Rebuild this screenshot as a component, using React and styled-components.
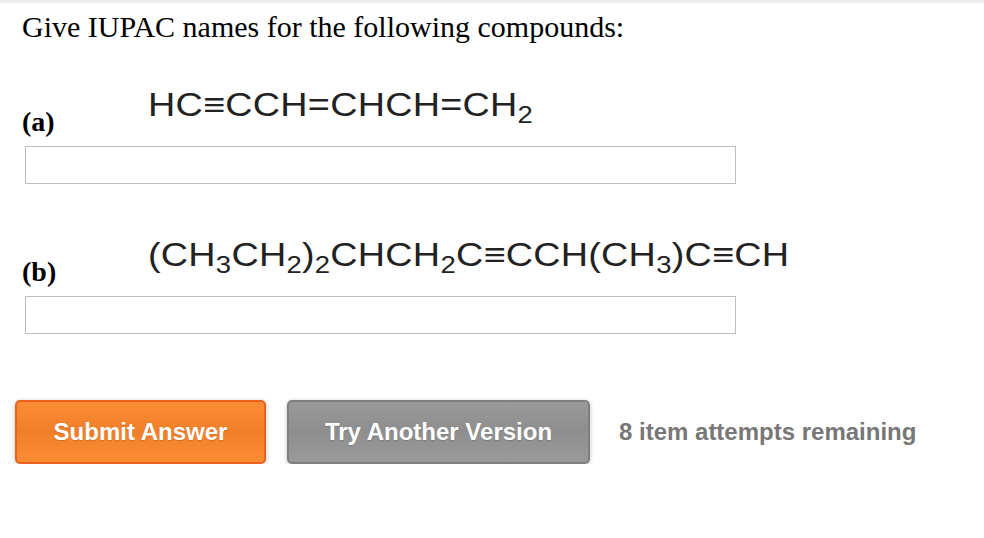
import React from "react";
import styled, { createGlobalStyle } from "styled-components";

const Global = createGlobalStyle`
  html, body { margin: 0; padding: 0; background: #fff; }
  body { font-family: "Liberation Serif", "Times New Roman", serif; }
`;

const TopBand = styled.div`
  height: 3px;
  background: #ececec;
`;

const Page = styled.div`
  padding: 0 0 0 22px;
  width: 984px;
  box-sizing: border-box;
`;

const Title = styled.h1`
  margin: 6px 0 0 0;
  font-weight: normal;
  font-size: 30px;
  line-height: 36px;
  color: #000;
`;

const Question = styled.section`
  margin-top: ${(p) => p.$top}px;
`;

const HeadRow = styled.div`
  display: flex;
  align-items: flex-start;
`;

const Label = styled.div`
  font-weight: bold;
  font-size: 28px;
  line-height: 30px;
  width: 126px;
  margin-top: ${(p) => p.$drop}px;
`;

const Formula = styled.div`
  font-family: "Liberation Sans", Arial, sans-serif;
  font-size: 33px;
  line-height: 36px;
  color: #222;
  letter-spacing: 0.2px;
  white-space: nowrap;
  transform: scaleX(1.145);
  transform-origin: left center;
  sub {
    font-size: 24px;
    line-height: 0;
    vertical-align: -7px;
  }
`;

const AnswerBox = styled.input`
  display: block;
  box-sizing: border-box;
  margin: ${(p) => p.$gap}px 0 0 3px;
  width: 711px;
  height: 38px;
  border: 1px solid #bdbdbd;
  outline: none;
  background: #fff;
`;

const Actions = styled.div`
  display: flex;
  align-items: center;
  margin: 66px 0 0 -7px;
  gap: 21px;
`;

const Button = styled.button`
  box-sizing: border-box;
  height: 64px;
  width: ${(p) => p.$w}px;
  border-radius: 5px;
  font-family: "Liberation Sans", Arial, sans-serif;
  font-weight: bold;
  font-size: 24px;
  color: #fff;
  border: 2px solid ${(p) => p.$border};
  background: linear-gradient(
    to bottom,
    ${(p) => p.$light} 0%,
    ${(p) => p.$mid} 48%,
    ${(p) => p.$light} 100%
  );
  box-shadow: 0 1px 4px rgba(0, 0, 0, 0.25);
  text-shadow: 0 1px 1px rgba(0, 0, 0, 0.15);
  padding: 0;
`;

const Remaining = styled.span`
  margin-left: 8px;
  font-family: "Liberation Sans", Arial, sans-serif;
  font-weight: bold;
  font-size: 24px;
  color: #777;
`;

export default function App() {
  return (
    <>
      <Global />
      <TopBand />
      <Page>
        <Title>Give IUPAC names for the following compounds:</Title>
        <Question $top={42}>
          <HeadRow>
            <Label $drop={20}>(a)</Label>
            <Formula>
              HC≡CCH=CHCH=CH<sub>2</sub>
            </Formula>
          </HeadRow>
          <AnswerBox $gap={9} aria-label="answer a" />
        </Question>
        <Question $top={53}>
          <HeadRow>
            <Label $drop={20}>(b)</Label>
            <Formula>
              (CH<sub>3</sub>CH<sub>2</sub>)<sub>2</sub>CHCH<sub>2</sub>C≡CCH(CH<sub>3</sub>)C≡CH
            </Formula>
          </HeadRow>
          <AnswerBox $gap={9} aria-label="answer b" />
        </Question>
        <Actions>
          <Button $w={251} $border="#e8621c" $light="#fb8c34" $mid="#f07f2a">
            Submit Answer
          </Button>
          <Button $w={303} $border="#7f7f7f" $light="#9a9a9a" $mid="#8e8e8e">
            Try Another Version
          </Button>
          <Remaining>8 item attempts remaining</Remaining>
        </Actions>
      </Page>
    </>
  );
}
